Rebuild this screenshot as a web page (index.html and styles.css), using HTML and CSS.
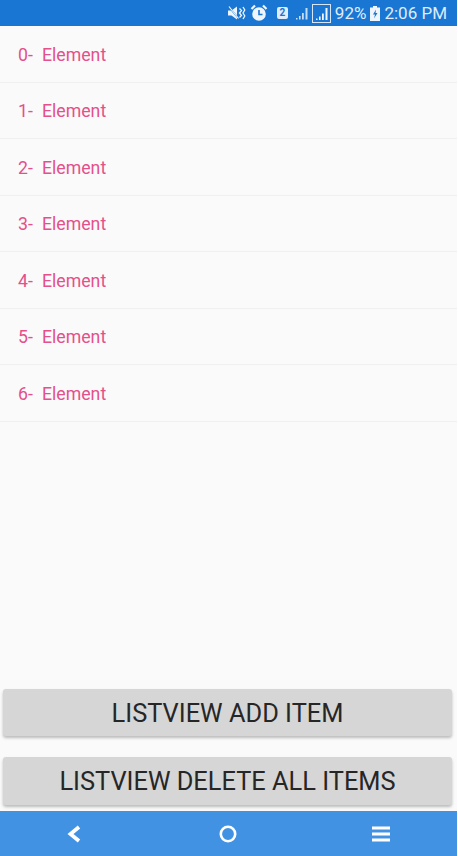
FILE: index.html
```html
<!DOCTYPE html>
<html lang="en">
<head>
<meta charset="utf-8">
<title>ListView</title>
<link rel="stylesheet" href="styles.css">
</head>
<body>
<div class="screen">
  <header class="status">
    <svg class="ico ico-mute" viewBox="0 0 18 14"><path d="M0 4.500h3.500L9 .5v13L3.500 9.500H0z" fill="#eef5fc"/><path d="M1 1l10 12" stroke="#1976d2" stroke-width="1.400"/><path d="M1 .5l9.500 12" stroke="#eef5fc" stroke-width="1.200"/><path d="M11.500 2.500l2 2-2 2.500 2 2.500-2 2M15 1l1.800 3-1.800 3 1.800 3-1.800 3" fill="none" stroke="#eef5fc" stroke-width="1.300"/></svg>
    <svg class="ico ico-alarm" viewBox="0 0 18 18"><circle cx="9" cy="10" r="6.800" fill="#eef5fc"/><path d="M9 6v4.500h3.500" fill="none" stroke="#1976d2" stroke-width="1.600"/><path d="M1.500 5l3.500-3.500M16.500 5L13 1.500" stroke="#eef5fc" stroke-width="2.200"/></svg>
    <span class="sim">2</span>
    <svg class="ico ico-sig" viewBox="0 0 15 14"><path d="M1 12h1.500v1.500H1zM4 10h1.600v3.500H4zM7 7h1.800v6.500H7zM10.500 2h2v11.500h-2z" fill="#c4dcf4"/></svg>
    <svg class="ico ico-sigbox" viewBox="0 0 19 19"><rect x=".5" y=".5" width="18" height="18" fill="none" stroke="#d6e6f7"/><path d="M4 14.500h1.500V16H4zM7 12.500h1.600V16H7zM10 9.500h1.800V16H10zM13.500 4h2v12h-2z" fill="#eef5fc"/></svg>
    <span class="pct">92%</span>
    <svg class="ico ico-batt" viewBox="0 0 10 15"><path d="M3 0h4v1.500h3V15H0V1.500h3z" fill="#eef5fc"/><path d="M6 3.500L3 8.500h2L4 12.500l3.500-5.500H5.500z" fill="#1976d2"/></svg>
    <span class="time">2:06 PM</span>
  </header>
  <ul class="list">
    <li class="row"><span class="idx">0-</span><span>Element</span></li>
    <li class="row"><span class="idx">1-</span><span>Element</span></li>
    <li class="row"><span class="idx">2-</span><span>Element</span></li>
    <li class="row"><span class="idx">3-</span><span>Element</span></li>
    <li class="row"><span class="idx">4-</span><span>Element</span></li>
    <li class="row"><span class="idx">5-</span><span>Element</span></li>
    <li class="row"><span class="idx">6-</span><span>Element</span></li>
  </ul>
  <div class="actions">
    <button class="btn" type="button">LISTVIEW ADD ITEM</button>
    <button class="btn btn-del" type="button">LISTVIEW DELETE ALL ITEMS</button>
  </div>
  <nav class="nav">
    <svg class="nav-ico" viewBox="0 0 18 18"><path d="M13 2L4.500 9l8.500 7" fill="none" stroke="#fff" stroke-width="3.800"/></svg>
    <svg class="nav-ico" viewBox="0 0 18 18"><circle cx="9" cy="9" r="7.200" fill="none" stroke="#fff" stroke-width="2.600"/></svg>
    <svg class="nav-ico" viewBox="0 0 18 18"><path d="M0 3h18M0 9h18M0 15h18" stroke="#fff" stroke-width="3"/></svg>
  </nav>
</div>
</body>
</html>
```
FILE: styles.css
```css
html, body { margin: 0; padding: 0; background: #fff; }
.screen {
  width: 457px;
  height: 856px;
  display: flex;
  flex-direction: column;
  background: #fafafa;
  font-family: Roboto, "Noto Sans", sans-serif;
  overflow: hidden;
}
.status {
  height: 26px;
  flex: none;
  background: #1976d2;
  color: #dfecfa;
  display: flex;
  align-items: center;
  justify-content: flex-end;
  padding-right: 10px;
  font-size: 17px;
  box-sizing: border-box;
}
.ico { display: block; flex: none; }
.ico-mute { width: 18px; height: 14px; margin-right: 4px; }
.ico-alarm { width: 18px; height: 18px; margin-right: 9px; }
.sim {
  width: 11px; height: 12px;
  background: #dfecfa; color: #1976d2;
  border-radius: 2px;
  font-size: 10px; font-weight: 700;
  line-height: 12px; text-align: center;
  margin-right: 7px;
}
.ico-sig { width: 15px; height: 14px; margin-right: 2px; }
.ico-sigbox { width: 19px; height: 19px; margin-right: 4px; }
.pct { margin-right: 4px; }
.ico-batt { width: 10px; height: 15px; margin-right: 4px; }
.list { list-style: none; margin: 0; padding: 0; flex: none; }
.row {
  height: 56.500px;
  box-sizing: border-box;
  border-bottom: 1px solid #f0f0f0;
  display: flex;
  align-items: center;
  padding: 2px 0 0 18px;
  color: #e4508a;
  font-size: 17.700px;
}
.idx { width: 24px; }
.actions {
  flex: 1;
  display: flex;
  flex-direction: column;
  justify-content: flex-end;
  gap: 21px;
  padding: 0 5px 6px 3px;
}
.btn {
  height: 47px;
  border: 0;
  border-radius: 3px;
  background: #d6d6d6;
  color: #262626;
  font-family: inherit;
  font-size: 25.400px;
  padding: 0;
  box-shadow: 0 2px 3px rgba(0,0,0,.25);
}
.btn-del { height: 48px; }
.nav {
  height: 45px;
  flex: none;
  background: #4292e4;
  display: flex;
  align-items: center;
}
.nav-ico { display: block; width: 18px; height: 18px; flex: none; }
.nav-ico:nth-child(1) { margin-left: 66px; }
.nav-ico:nth-child(2) { margin-left: 135px; }
.nav-ico:nth-child(3) { margin-left: 135px; }
```
